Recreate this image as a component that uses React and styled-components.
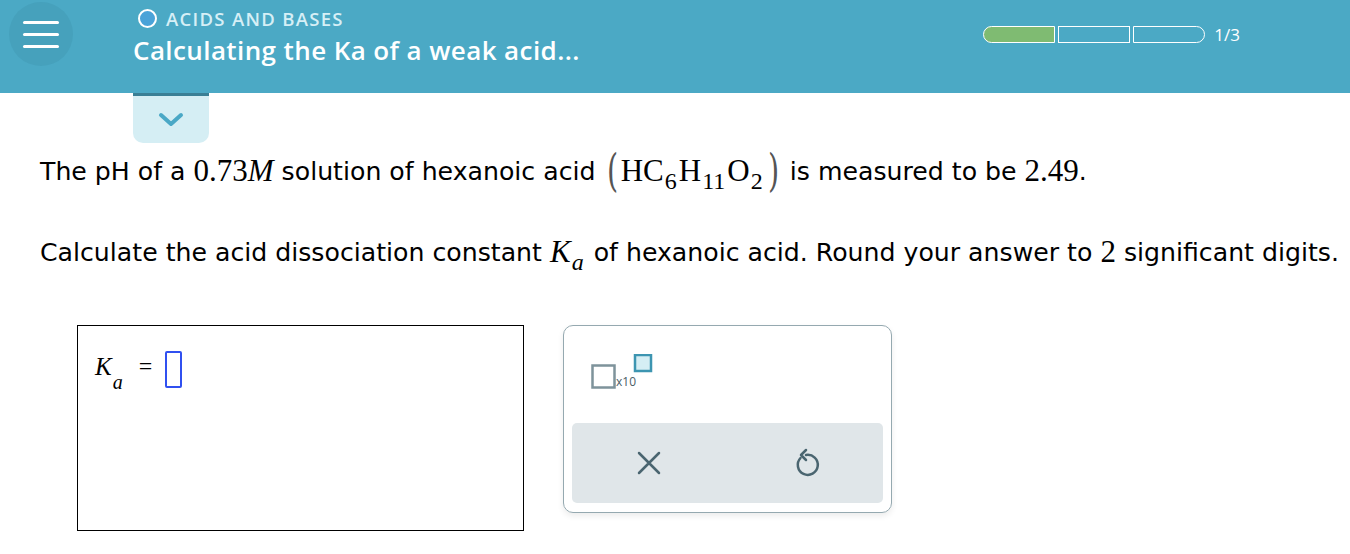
import React from "react";
import styled, { createGlobalStyle } from "styled-components";

const Global = createGlobalStyle`
  html, body { margin: 0; padding: 0; background: #fff; }
  body { font-family: "DejaVu Sans", Verdana, sans-serif; width: 1350px; height: 554px; overflow: hidden; }
`;

const Header = styled.header`
  height: 93px;
  background: #4ba9c5;
  display: flex;
  align-items: flex-start;
  position: relative;
`;

const MenuButton = styled.div`
  width: 64px;
  height: 64px;
  border-radius: 50%;
  background: #46a1bc;
  margin: 2px 0 0 9px;
  display: flex;
  flex-direction: column;
  justify-content: center;
  align-items: center;
  gap: 9px;
`;

const MenuLine = styled.span`
  width: 36px;
  height: 3px;
  border-radius: 2px;
  background: #fff;
`;

const TitleBlock = styled.div`
  margin-left: 60px;
  padding-top: 5px;
  display: flex;
  flex-direction: column;
  font-family: "Open Sans", sans-serif;
`;

const Topic = styled.div`
  display: flex;
  align-items: center;
  gap: 9px;
  margin-left: 5px;
  color: #d6eff6;
  font-size: 18.5px;
  font-weight: 600;
  font-family: "Open Sans", sans-serif;
  letter-spacing: 1.3px;
  height: 26px;
`;

const Dot = styled.span`
  width: 15px;
  height: 15px;
  border-radius: 50%;
  border: 2px solid #fff;
  background: #4aa3d8;
`;

const Title = styled.div`
  color: #fff;
  font-size: 26px;
  font-weight: 600;
  font-family: "Open Sans", sans-serif;
  margin-top: 1px;
  letter-spacing: 0.4px;
`;

const Progress = styled.div`
  margin-left: auto;
  margin-right: 110px;
  margin-top: 23px;
  display: flex;
  align-items: center;
  gap: 3px;
`;

const Seg = styled.div`
  width: ${p => p.w}px;
  height: 15px;
  border: 1.5px solid #fff;
  background: ${p => (p.done ? "#7fbb72" : "transparent")};
  border-radius: ${p => p.r};
`;

const Count = styled.span`
  color: #fff;
  font-family: "Open Sans", sans-serif;
  font-size: 17px;
  margin-left: 6px;
`;

const Tab = styled.div`
  width: 76px;
  height: 50px;
  margin-left: 133px;
  background: #d5eef4;
  border-radius: 0 0 10px 10px;
  border-top: 3px solid #3a7f95;
  box-sizing: border-box;
  display: flex;
  align-items: center;
  justify-content: center;
`;

const Main = styled.main`
  padding-left: 40px;
`;

const Para = styled.p`
  margin: 0;
  font-size: 25.2px;
  color: #000;
  display: flex;
  align-items: center;
  white-space: pre;
  height: ${p => p.h}px;
  margin-top: ${p => p.mt}px;
`;

const M = styled.span`
  font-family: "Liberation Serif", "Times New Roman", serif;
  font-size: 31px;
  font-style: ${p => (p.i ? "italic" : "normal")};
  margin: 0 ${p => p.gap || 0}px;
`;

const Sub = styled.sub`
  font-size: 24px;
  vertical-align: -8px;
  line-height: 0;
  margin: 0 2px 0 1px;
`;

const Paren = styled.span`
  font-family: "DejaVu Serif", serif;
  font-size: 44px;
  color: #555;
  font-weight: 200;
  transform: scaleX(0.65);
  display: inline-block;
  line-height: 1;
`;

const Work = styled.div`
  display: flex;
  align-items: flex-start;
  margin-top: 48px;
  margin-left: 77px;
  gap: 39px;
`;

const AnswerBox = styled.div`
  width: 447px;
  height: 206px;
  box-sizing: border-box;
  border: 1px solid #000;
  padding: 23px 0 0 17px;
  display: flex;
  align-items: flex-start;
`;

const KaLabel = styled.span`
  font-family: "Liberation Serif", serif;
  font-style: italic;
  font-size: 25px;
  line-height: 1;
  margin-top: 5px;
`;

const KaSub = styled.span`
  font-family: "Liberation Serif", serif;
  font-style: italic;
  font-size: 20px;
  display: inline-block;
  margin-top: 22px;
  margin-left: 1px;
`;

const Eq = styled.span`
  font-family: "Liberation Serif", serif;
  font-size: 24px;
  margin: 5px 0 0 16px;
  line-height: 1;
`;

const Slot = styled.span`
  width: 13px;
  height: 33px;
  border: 2px solid #3050f0;
  border-radius: 2px;
  margin: 2px 0 0 13px;
`;

const Keypad = styled.div`
  width: 329px;
  height: 188px;
  box-sizing: border-box;
  border: 1px solid #95a9b0;
  border-radius: 10px;
  box-shadow: 0 3px 6px rgba(0, 0, 0, 0.08);
  padding: 0 8px 9px 8px;
  display: flex;
  flex-direction: column;
`;

const KeyArea = styled.div`
  flex: 1;
  display: flex;
  align-items: flex-start;
  padding: 28px 0 0 19px;
`;

const Actions = styled.div`
  height: 80px;
  border-radius: 5px;
  background: #e0e6e9;
  display: flex;
  align-items: center;
  justify-content: space-between;
  padding: 0 47px;
`;

const IconBtn = styled.div`
  width: 60px;
  display: flex;
  justify-content: center;
`;

function Sci() {
  return (
    <svg width="70" height="40" viewBox="0 0 70 40">
      <rect x="1.5" y="11.5" width="22" height="22" fill="none" stroke="#7e939b" strokeWidth="2.5" />
      <text x="25" y="32" fontFamily="Open Sans, sans-serif" fontSize="12" fill="#4a5e66">x10</text>
      <rect x="44" y="1" width="16" height="16" fill="#d5eef4" stroke="#3d95b1" strokeWidth="2.5" />
    </svg>
  );
}

export default function App() {
  return (
    <>
      <Global />
      <Header>
        <MenuButton>
          <MenuLine />
          <MenuLine />
          <MenuLine />
        </MenuButton>
        <TitleBlock>
          <Topic>
            <Dot />
            ACIDS AND BASES
          </Topic>
          <Title>Calculating the Ka of a weak acid...</Title>
        </TitleBlock>
        <Progress>
          <Seg w={70} done r="9px 0 0 9px" />
          <Seg w={70} r="0" />
          <Seg w={70} r="0 9px 9px 0" />
          <Count>1/3</Count>
        </Progress>
      </Header>
      <Tab>
        <svg width="28" height="18" viewBox="0 0 28 18">
          <path d="M4 4 L14 13 L24 4" fill="none" stroke="#4aa8c6" strokeWidth="4" strokeLinecap="round" strokeLinejoin="round" />
        </svg>
      </Tab>
      <Main>
        <Para h={56} mt={0}>
          {"The pH of a "}
          <M>0.73</M>
          <M i>M</M>
          {" solution of hexanoic acid "}
          <Paren>(</Paren>
          <M>
            HC<Sub>6</Sub>H<Sub>11</Sub>O<Sub>2</Sub>
          </M>
          <Paren>)</Paren>
          {" is measured to be "}
          <M>2.49</M>
          {"."}
        </Para>
        <Para h={50} mt={28}>
          {"Calculate the acid dissociation constant "}
          <M i>
            K<Sub>a</Sub>
          </M>
          {" of hexanoic acid. Round your answer to "}
          <M>2</M>
          {" significant digits."}
        </Para>
      </Main>
      <Work>
        <AnswerBox>
          <KaLabel>K</KaLabel>
          <KaSub>a</KaSub>
          <Eq>=</Eq>
          <Slot />
        </AnswerBox>
        <Keypad>
          <KeyArea>
            <Sci />
          </KeyArea>
          <Actions>
            <IconBtn>
              <svg width="26" height="26" viewBox="0 0 26 26">
                <path d="M3 3 L23 23 M23 3 L3 23" stroke="#4a6570" strokeWidth="2.5" strokeLinecap="round" />
              </svg>
            </IconBtn>
            <IconBtn>
              <svg width="28" height="30" viewBox="0 0 28 30">
                <path d="M8.5 10 A10 10 0 1 0 14 7" fill="none" stroke="#4a6570" strokeWidth="2.5" strokeLinecap="round" />
                <path d="M14 2 L9 7 L14 12" fill="none" stroke="#4a6570" strokeWidth="2.5" strokeLinecap="round" strokeLinejoin="round" />
              </svg>
            </IconBtn>
          </Actions>
        </Keypad>
      </Work>
    </>
  );
}
